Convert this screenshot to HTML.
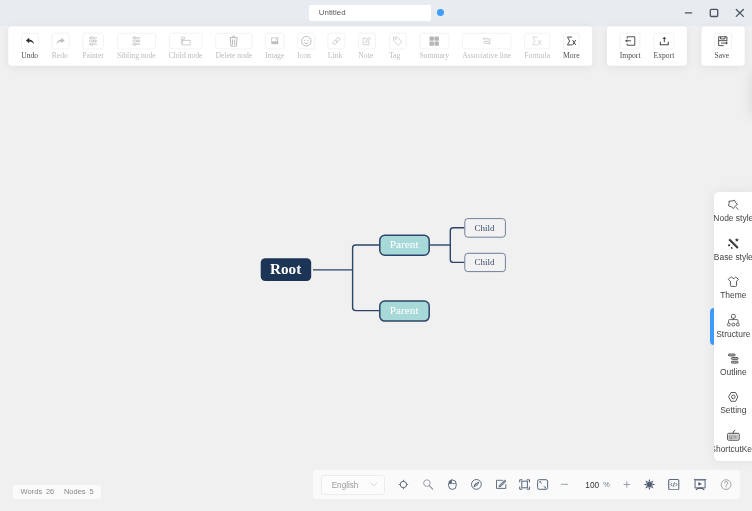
<!DOCTYPE html>
<html><head><meta charset="utf-8">
<style>
*{box-sizing:border-box;margin:0;padding:0}
html,body{width:752px;height:511px;overflow:hidden;background:#f0f0f0;font-family:"Liberation Sans",sans-serif}
.abs{position:absolute}
#title{left:0;top:0;width:752px;height:25.5px;background:#e8ebef}
#tinput{left:309px;top:4.8px;width:121.5px;height:16.3px;background:#fff;border-radius:2px}
#tinput span{position:absolute;left:9.8px;top:3.5px;font-size:7.9px;color:#5a5a5a;font-family:"Liberation Sans",sans-serif}
#dot{left:437.3px;top:9.4px;width:6.8px;height:6.8px;border-radius:50%;background:#409eff}
/* toolbar */
#tbw{left:8px;top:25.6px}
.tbs{transform:scale(0.62667);transform-origin:0 0;display:flex;font-family:"Liberation Serif",serif;font-size:12.2px;color:rgba(26,26,26,.8);width:1200px}
.blk{display:flex;background:#fff;padding:10px 20px;border-radius:6px;box-shadow:0 2px 16px 0 rgba(0,0,0,.06);border:1px solid rgba(0,0,0,.04);margin-right:22px;flex-shrink:0}
.btn{display:flex;flex-direction:column;justify-content:center;margin-right:20.75px}
.btn:last-child{margin-right:0}
.ic{display:flex;height:26px;background:#fff;border-radius:4px;border:1px solid #ececec;justify-content:center;align-items:center;padding:0 5px;min-width:27.5px}
.ic svg{width:16px;height:16px;display:block;overflow:visible}
.tx{margin-top:4.8px;text-align:left;white-space:nowrap;line-height:11.2px}
.dis{color:#bcbcbc}
/* sidebar */
#sb{left:714px;top:192.1px;width:40px;height:268.8px;background:#fff;border-radius:5px 0 0 5px;box-shadow:0 0 12px rgba(0,0,0,.07);overflow:hidden}
.si{position:absolute;left:0;width:38.6px;height:38.45px;text-align:center}
.si svg{position:absolute;left:13.6px;top:7px;width:11.5px;height:11.5px}
.si span{position:absolute;left:-20px;right:-20px;top:21.1px;font-size:8.45px;color:#444;white-space:nowrap;text-align:center}
#ind{left:710.2px;top:307.5px;width:5px;height:37.1px;background:#409eff;border-radius:4px 0 0 4px}
/* bottom */
#cnt{left:13.1px;top:484.9px;width:88px;height:13.7px;background:#fafafa;border-radius:2px;font-size:7.5px;color:#888}
#cnt span{position:absolute;top:2px}
#bt{left:313px;top:469.9px;width:426.5px;height:29px;background:#fafafa;border-radius:4px}
#sel{left:321.2px;top:474.6px;width:63.5px;height:20px;border:1px solid #eaecef;border-radius:3px;background:#fcfcfc}
#sel span{position:absolute;left:9.5px;top:5px;font-size:8.15px;color:#9a9a9a}
.bi{position:absolute;top:478.5px;width:12px;height:12px}
</style></head>
<body>
<div id="wrap" style="position:absolute;left:0;top:0;width:752px;height:511px;will-change:transform">
<div id="title" class="abs"></div>
<div id="tinput" class="abs"><span>Untitled</span></div>
<div id="dot" class="abs"></div>
<svg class="abs" style="left:676px;top:0" width="76" height="26" viewBox="0 0 76 26">
  <g stroke="#4a5464" stroke-width="1.3" fill="none" stroke-linecap="round">
    <line x1="9.4" y1="12.9" x2="15.6" y2="12.9"/>
    <rect x="34.3" y="9.4" width="7.4" height="7.1" rx="1"/>
    <line x1="60.3" y1="9.5" x2="67.4" y2="16.4"/>
    <line x1="67.4" y1="9.5" x2="60.3" y2="16.4"/>
  </g>
</svg>

<div id="tbw" class="abs"><div class="tbs">
 <div class="blk">
  <div class="btn"><div class="ic"><svg viewBox="0 0 16 16"><path d="M6.8 2.6 L1.6 7.2 L6.8 11.6 V8.9 C10.2 8.7 12.8 10.2 14.6 13.6 C14.2 8.8 11.4 6 6.8 5.7 Z" fill="#2e2e2e"/></svg></div><div class="tx">Undo</div></div>
  <div class="btn dis"><div class="ic"><svg viewBox="0 0 16 16"><path d="M9.2 2.6 L14.4 7.2 L9.2 11.6 V8.9 C5.8 8.7 3.2 10.2 1.4 13.6 C1.8 8.8 4.6 6 9.2 5.7 Z" fill="#bdbdbd"/></svg></div><div class="tx">Redo</div></div>
  <div class="btn dis"><div class="ic"><svg viewBox="0 0 16 16"><g stroke="#b8b8b8" stroke-width="1.3" fill="#fff"><line x1="1.3" y1="3" x2="14.2" y2="3"/><line x1="1.3" y1="8" x2="14.2" y2="8"/><line x1="1.3" y1="13" x2="14.2" y2="13"/><circle cx="5.4" cy="3" r="2"/><circle cx="10.2" cy="8" r="2"/><circle cx="5.4" cy="13" r="2"/></g></svg></div><div class="tx">Painter</div></div>
  <div class="btn dis"><div class="ic"><svg viewBox="0 0 16 16"><g stroke="#b8b8b8" stroke-width="1.3" fill="#fff"><line x1="1.3" y1="3" x2="14.2" y2="3"/><line x1="1.3" y1="8" x2="14.2" y2="8"/><line x1="1.3" y1="13" x2="14.2" y2="13"/><circle cx="5.4" cy="3" r="2"/><circle cx="10.2" cy="8" r="2"/><circle cx="5.4" cy="13" r="2"/></g></svg></div><div class="tx">Sibling node</div></div>
  <div class="btn dis"><div class="ic"><svg viewBox="0 0 16 16"><g stroke="#c0c0c0" stroke-width="1.2" fill="none"><rect x="1.6" y="1.8" width="5" height="3.6" rx="0.6"/><path d="M2.2 5.4 V13"/><rect x="3" y="6.8" width="12.6" height="7.4"/></g></svg></div><div class="tx">Child node</div></div>
  <div class="btn dis"><div class="ic"><svg viewBox="0 0 16 16"><g stroke="#ababab" stroke-width="1.3" fill="none"><path d="M1.6 2.6 H14.4"/><path d="M5.5 2.3 C5.5 -0.8 10.5 -0.8 10.5 2.3"/><path d="M2.8 3.2 L3.6 16.2 H12.6 L13.4 3.2"/><path d="M6.3 5.5 V14 M9.7 5.5 V14"/></g></svg></div><div class="tx">Delete node</div></div>
  <div class="btn dis"><div class="ic"><svg viewBox="0 0 16 16"><rect x="2.1" y="2.3" width="11.2" height="10.7" fill="#bdbdbd"/><path d="M3.4 3.6 H12 V7.2 L10.6 8.6 L8.6 7 L6.2 9.4 L4.8 8 L3.4 9.2 Z" fill="#fff"/><circle cx="10.3" cy="5.3" r="0.9" fill="#bdbdbd"/></svg></div><div class="tx">Image</div></div>
  <div class="btn dis"><div class="ic"><svg viewBox="0 0 16 16"><g stroke="#a8a8a8" stroke-width="1.2" fill="none"><circle cx="8.05" cy="8.3" r="7.6"/><path d="M4.8 10.4 C6.2 12.8 9.8 12.8 11.2 10.4"/></g><circle cx="5.3" cy="6.7" r="0.9" fill="#a8a8a8"/><circle cx="10.8" cy="6.7" r="0.9" fill="#a8a8a8"/></svg></div><div class="tx">Icon</div></div>
  <div class="btn dis"><div class="ic"><svg viewBox="0 0 16 16"><g stroke="#c4c4c4" stroke-width="1.2" fill="none" transform="rotate(-45 8 8)"><rect x="1.2" y="5.6" width="7.2" height="4.8" rx="2.4"/><rect x="7.6" y="5.6" width="7.2" height="4.8" rx="2.4"/></g></svg></div><div class="tx">Link</div></div>
  <div class="btn dis"><div class="ic"><svg viewBox="0 0 16 16"><g stroke="#c4c4c4" stroke-width="1.2" fill="none"><path d="M8.5 3.6 H1.6 V14 H11 V8"/><path d="M4.9 10.5 L5.4 8.6 L11.6 2.4 L13.1 3.9 L6.9 10.1 Z"/></g></svg></div><div class="tx">Note</div></div>
  <div class="btn dis"><div class="ic"><svg viewBox="0 0 16 16"><g stroke="#c4c4c4" stroke-width="1.2" fill="none" stroke-linejoin="round"><path d="M1.2 1.8 H7 L14.5 9.3 L8.7 14.8 L1.2 7.5 Z"/><circle cx="4.8" cy="4.8" r="0.9"/></g></svg></div><div class="tx">Tag</div></div>
  <div class="btn dis"><div class="ic"><svg viewBox="0 0 16 16"><g fill="#b5b5b5"><rect x="0.6" y="0.6" width="7" height="7" rx="1.4"/><rect x="8.6" y="0.6" width="7" height="7" rx="1.4"/><rect x="0.6" y="8.6" width="7" height="7" rx="1.4"/><rect x="8.6" y="8.6" width="7" height="7" rx="1.4"/></g></svg></div><div class="tx">Summary</div></div>
  <div class="btn dis"><div class="ic"><svg viewBox="0 0 16 16"><g stroke="#c4c4c4" stroke-width="1.3" fill="none" stroke-linejoin="round"><path d="M4.2 2.8 L2.6 4.4 L4.2 6 M2.6 4.4 H12 Q13.8 4.4 13.8 6.4 Q13.8 8.4 12 8.4 H5.4 Q3.6 8.4 3.6 10 Q3.6 11.6 5.4 11.6 H13.6 M12 10 L13.6 11.6 L12 13.2"/></g></svg></div><div class="tx">Associative line</div></div>
  <div class="btn dis"><div class="ic"><svg viewBox="0 0 16 16"><g stroke="#c8c8c8" stroke-width="1.1" fill="none"><path d="M9.1 1.6 H1.6 L5 7.9 L1.6 14.2 H9.1"/><path d="M9.9 6.4 L14.9 14.4 M14.9 6.4 L9.9 14.4"/></g></svg></div><div class="tx">Formula</div></div>
  <div class="btn"><div class="ic" style="min-width:0;padding:0 3px"><svg viewBox="0 0 16 16"><g stroke="#333" stroke-width="1.4" fill="none"><path d="M9.1 1.6 H1.8 L5.2 7.9 L1.8 14.2 H9.1"/><path d="M9.9 6.4 L14.9 14.4 M14.9 6.4 L9.9 14.4"/></g></svg></div><div class="tx">More</div></div>
 </div>
 <div class="blk">
  <div class="btn"><div class="ic"><svg viewBox="0 0 16 16"><g stroke="#444" stroke-width="1.5" fill="none"><path d="M3 4 V1.2 H15.2 V14.7 H3 V12"/><path d="M0.6 7.6 H9.2"/></g><path d="M0 7.6 L3.2 5 V10.2 Z" fill="#444"/></svg></div><div class="tx">Import</div></div>
  <div class="btn"><div class="ic"><svg viewBox="0 0 16 16"><g stroke="#444" stroke-width="1.6" fill="none"><path d="M8.3 4 V9.8"/><path d="M2 9 V14 H14.6 V9"/></g><path d="M8.3 1.2 L11.4 4.6 H5.2 Z" fill="#444"/></svg></div><div class="tx">Export</div></div>
 </div>
 <div class="blk">
  <div class="btn"><div class="ic"><svg viewBox="0 0 16 16"><g stroke="#444" stroke-width="1.5" fill="none"><path d="M14.2 8.5 V1.2 H1 V15.3 H9"/><path d="M1 7.4 H14.2"/><path d="M4 1.2 V4.6 H11.2 V1.2"/><path d="M5 11.3 H12.6"/></g><path d="M12.4 8.6 L15.8 11.3 L12.4 14 Z" fill="#444"/></svg></div><div class="tx">Save</div></div>
 </div>
</div></div>

<!-- mind map -->
<svg class="abs" style="left:0;top:0" width="752" height="511" viewBox="0 0 752 511">
  <defs><filter id="soft" x="-20%" y="-40%" width="140%" height="180%"><feGaussianBlur stdDeviation="0.35"/></filter></defs>
  <g stroke="#2c4568" stroke-width="1.4" fill="none">
    <path d="M313 269.9 H352.6"/>
    <path d="M379.1 245 H355.6 Q352.6 245 352.6 248 V307.6 Q352.6 310.6 355.6 310.6 H379.1"/>
    <path d="M429.8 245 H450.3"/>
    <path d="M464.4 227.8 H453.3 Q450.3 227.8 450.3 230.8 V259.4 Q450.3 262.4 453.3 262.4 H464.4"/>
  </g>
  <rect x="260.7" y="258.2" width="50.5" height="22.8" rx="4.6" fill="#1f3557" filter="url(#soft)"/>
  <text x="285.6" y="273.9" text-anchor="middle" font-family="Liberation Serif" font-weight="bold" font-size="15.2" fill="#fff">Root</text>
  <rect x="379.8" y="235.2" width="49.4" height="20" rx="5" fill="#a7d9d9" stroke="#2c4568" stroke-width="1.5"/>
  <text x="404.2" y="248.2" text-anchor="middle" font-family="Liberation Serif" font-size="11.28" fill="#fff">Parent</text>
  <rect x="379.8" y="301.1" width="49.4" height="20" rx="5" fill="#a7d9d9" stroke="#2c4568" stroke-width="1.5"/>
  <text x="404.2" y="314" text-anchor="middle" font-family="Liberation Serif" font-size="11.28" fill="#fff">Parent</text>
  <rect x="464.8" y="218.6" width="40.6" height="18.6" rx="3" fill="#f2f2f2" stroke="#61738f" stroke-width="0.9"/>
  <text x="484.4" y="230.7" text-anchor="middle" font-family="Liberation Serif" font-size="9" fill="#3a4d6a">Child</text>
  <rect x="464.8" y="253.3" width="40.6" height="18.3" rx="3" fill="#f2f2f2" stroke="#61738f" stroke-width="0.9"/>
  <text x="484.4" y="265.1" text-anchor="middle" font-family="Liberation Serif" font-size="9" fill="#3a4d6a">Child</text>
</svg>

<!-- sidebar -->
<div class="abs" style="left:752px;top:70px;width:40px;height:46px;background:#fff;box-shadow:0 0 12px rgba(0,0,0,.10)"></div>
<div id="ind" class="abs"></div>
<div id="sb" class="abs">
  <div class="si" style="top:0"><span>Node style</span></div>
  <div class="si" style="top:38.45px"><span>Base style</span></div>
  <div class="si" style="top:76.9px"><span>Theme</span></div>
  <div class="si" style="top:115.35px"><span>Structure</span></div>
  <div class="si" style="top:153.8px"><span>Outline</span></div>
  <div class="si" style="top:192.25px"><span>Setting</span></div>
  <div class="si" style="top:230.7px"><span>ShortcutKey</span></div>
</div>
<svg class="abs" style="left:0;top:0" width="752" height="511" viewBox="0 0 752 511">
  <g stroke="#4a4a4a" stroke-width="0.9" fill="none" stroke-linejoin="round" stroke-linecap="round">
    <path d="M729.3 201.1 L732 201 L734.5 200.2 L735.6 202.6 L737.5 204.3 L735.1 206.2 L733.4 208.5 L731.3 206.8 L728.5 205.8 L729.1 203.3 Z"/>
    <path d="M736.4 207.5 L738 209.3"/>
  </g>
  <g fill="#3a3a3a">
    <path d="M729.9 238.6 L738.6 247.3 L737.1 248.8 L728.4 240.1 Z"/>
    <path d="M736.9 237.9 L737.5 239.2 L738.9 239.3 L737.9 240.2 L738.2 241.6 L736.9 240.9 L735.6 241.6 L735.9 240.2 L734.9 239.3 L736.3 239.2 Z"/>
    <circle cx="729.1" cy="245.3" r="1.1"/>
    <circle cx="731.7" cy="247.9" r="0.9"/>
  </g>
  <path d="M729.4 239.5 L730.7 238.2" stroke="#fff" stroke-width="0.6" opacity="0.7"/>
  <path d="M730.6 277.1 Q731.8 276.6 733.1 278.4 Q734.4 278.9 735.7 277.1 L738.5 279.3 L736.5 281.3 V285.6 Q736.5 286.4 735.7 286.4 H731.2 Q730.4 286.4 730.4 285.6 V281.3 L728.3 279.4 Z" stroke="#4a4a4a" stroke-width="0.9" fill="none" stroke-linejoin="round"/>
  <g stroke="#4a4a4a" stroke-width="0.85" fill="none">
    <rect x="731.4" y="314.4" width="3.9" height="3.9" rx="1.3"/>
    <path d="M733.3 318.3 V319.6 M728.6 322.9 V320.4 Q728.6 319.6 729.4 319.6 H737.2 Q738 319.6 738 320.4 V322.9"/>
    <rect x="727.4" y="323.2" width="2.9" height="2.7" rx="1.2"/>
    <rect x="731.9" y="323.2" width="2.9" height="2.7" rx="1"/>
    <rect x="736.3" y="323.2" width="2.9" height="2.7" rx="1"/>
  </g>
  <g stroke="#4f4f4f" stroke-width="0.9" fill="#b8b8b8">
    <rect x="728.3" y="354" width="6.9" height="1.9" rx="0.95"/>
    <rect x="731.3" y="357.5" width="6.9" height="1.9" rx="0.95"/>
    <rect x="731.3" y="361.2" width="6.9" height="1.9" rx="0.95"/>
  </g>
  <g stroke="#4a4a4a" stroke-width="0.9" fill="none" stroke-linejoin="round">
    <path d="M728.6 396.9 L731 392.5 H735.6 L737.8 396.9 L735.6 401.3 H731 Z"/>
    <circle cx="733.3" cy="396.9" r="1.8"/>
  </g>
  <g stroke="#4a4a4a" stroke-width="1" fill="none">
    <rect x="727.6" y="433.3" width="11.6" height="6.9" rx="1"/>
    <path d="M733.2 433.2 V431.6 L735.3 430.2"/>
  </g>
  <rect x="728.6" y="434.4" width="9.6" height="4.8" fill="#c4c4c4"/>
  <path d="M729.3 435.3 V438.5 M731.2 435.3 V438.5 M733.1 435.3 V437.5 M735 435.3 V437.5 M734.5 437.9 L736.5 437.1 M729.8 438.6 H732.5" stroke="#6a6a6a" stroke-width="0.5"/>
</svg>

<!-- bottom left -->
<div id="cnt" class="abs"><span style="left:7.5px">Words</span><span style="left:32.8px">26</span><span style="left:50.8px">Nodes</span><span style="left:76.3px">5</span></div>

<!-- bottom toolbar -->
<div id="bt" class="abs"></div>
<div id="sel" class="abs"><span>English</span><svg style="position:absolute;left:48px;top:6.6px" width="8" height="5" viewBox="0 0 8 5"><path d="M0.6 0.6 L3.9 3.9 L7.2 0.6" stroke="#c8ccd2" stroke-width="0.8" fill="none"/></svg></div>
<svg class="abs" style="left:0;top:0" width="752" height="511" viewBox="0 0 752 511">
  <circle cx="403.4" cy="484.5" r="3.2" stroke="#56657a" stroke-width="0.95" fill="none"/>
  <path d="M403.4 479.3 L404.2 481.6 H402.6 Z M403.4 489.7 L404.2 487.4 H402.6 Z M398.2 484.5 L400.5 483.7 V485.3 Z M408.6 484.5 L406.3 483.7 V485.3 Z" fill="#56657a"/>
  <circle cx="426.9" cy="483.1" r="3.3" stroke="#8a94a0" stroke-width="0.85" fill="none"/>
  <path d="M429.3 485.6 L432.6 489.1" stroke="#8a94a0" stroke-width="1.2" stroke-linecap="round"/>
  <rect x="448.6" y="480" width="7.6" height="9.4" rx="3.8" stroke="#56657a" stroke-width="0.95" fill="none"/>
  <path d="M448.8 483.6 H456" stroke="#56657a" stroke-width="0.7"/>
  <path d="M449.1 483.5 V482.6 Q449.1 480.6 451.8 480.3 V483.5 Z" fill="#4f5f74"/>
  <path d="M451.9 478.9 V480.3" stroke="#56657a" stroke-width="0.7"/>
  <circle cx="476.4" cy="484.4" r="4.9" stroke="#56657a" stroke-width="0.95" fill="none"/>
  <path d="M473.9 486.8 Q474.1 483.6 478.9 482 Q478.4 485.8 473.9 486.8 Z" stroke="#56657a" stroke-width="0.8" fill="none"/>
  <path d="M473.9 486.8 Q474.1 483.6 478.9 482 Z" fill="#56657a"/>
  <path d="M502.8 480.3 H496.5 V488.4 H505.8 V484.2" stroke="#5a697e" stroke-width="0.95" fill="none"/>
  <path d="M499 487 L499.5 485.2 L504.7 480 L506 481.3 L500.8 486.5 Z" stroke="#5a697e" stroke-width="0.8" fill="#8f9aa8"/>
  <g stroke="#56657a" stroke-width="1" fill="none">
    <path d="M519.7 482.3 V479.8 H522.4 M526.8 479.8 H529.5 V482.3 M529.5 486.6 V489.2 H526.8 M522.4 489.2 H519.7 V486.6"/>
    <rect x="521.8" y="481.2" width="5.6" height="6.6"/>
  </g>
  <rect x="537.6" y="479.7" width="10" height="9.6" rx="1.6" stroke="#56657a" stroke-width="1" fill="none"/>
  <path d="M539.7 481.5 L541.8 483.6 M543.6 485.9 L545.7 488" stroke="#56657a" stroke-width="0.8"/>
  <path d="M539.5 481.3 H541.3 L539.5 483.1 Z M545.9 488.2 H544.1 L545.9 486.4 Z" fill="#56657a"/>
  <path d="M561 484.3 H568" stroke="#8a96a8" stroke-width="0.9"/>
  <text x="585.3" y="487.8" font-family="Liberation Sans" font-size="8.3" fill="#333">100</text>
  <text x="603.3" y="487.4" font-family="Liberation Sans" font-size="7.3" fill="#6a7a90">%</text>
  <path d="M623.6 484.5 H630 M626.8 481.3 V487.7" stroke="#8a96a8" stroke-width="0.9"/>
  <circle cx="649.4" cy="484.5" r="2.9" fill="#6c7a8c"/>
  <circle cx="649.4" cy="484.5" r="2.2" fill="#4d5b6e"/>
  <g fill="#4d5b6e" transform="translate(649.4 484.5)">
    <path d="M-0.9 -3 L0 -5.8 L0.9 -3 Z"/>
    <path d="M-0.9 -3 L0 -5.8 L0.9 -3 Z" transform="rotate(45)"/>
    <path d="M-0.9 -3 L0 -5.8 L0.9 -3 Z" transform="rotate(90)"/>
    <path d="M-0.9 -3 L0 -5.8 L0.9 -3 Z" transform="rotate(135)"/>
    <path d="M-0.9 -3 L0 -5.8 L0.9 -3 Z" transform="rotate(180)"/>
    <path d="M-0.9 -3 L0 -5.8 L0.9 -3 Z" transform="rotate(225)"/>
    <path d="M-0.9 -3 L0 -5.8 L0.9 -3 Z" transform="rotate(270)"/>
    <path d="M-0.9 -3 L0 -5.8 L0.9 -3 Z" transform="rotate(315)"/>
  </g>
  <rect x="668.7" y="479.5" width="10" height="10" rx="1.1" stroke="#5a697e" stroke-width="1.1" fill="none"/>
  <path d="M678.7 480.5 V489.5 H669.7" stroke="#8f9aa8" stroke-width="0.8" fill="none"/>
  <path d="M672.2 483 L670.8 484.6 L672.2 486.2 M675.6 483 L677 484.6 L675.6 486.2 M674.5 482.4 L673.2 486.8" stroke="#4d5b6e" stroke-width="0.85" fill="none"/>
  <path d="M694 479.6 H706.2" stroke="#5a697e" stroke-width="1.3"/>
  <rect x="695.1" y="479.8" width="10" height="8" stroke="#6f7d8f" stroke-width="1.2" fill="none"/>
  <path d="M698.3 482.1 L702 484 L698.3 485.8 Z" fill="#4d5b6e"/>
  <path d="M696 490 Q697 488.2 700.1 488.2 Q703.2 488.2 704.2 490" stroke="#4d5b6e" stroke-width="1.2" fill="none"/>
  <circle cx="726.1" cy="484.6" r="4.9" stroke="#8f959c" stroke-width="0.8" fill="none"/>
  <path d="M724.6 483.2 Q724.6 481.4 726.2 481.4 Q727.8 481.4 727.8 483 Q727.8 484.2 726.3 484.8 L726 487" stroke="#8f959c" stroke-width="0.8" fill="none"/>
  <circle cx="726" cy="488" r="0.45" fill="#8f959c"/>
</svg>
</div>
</body></html>
